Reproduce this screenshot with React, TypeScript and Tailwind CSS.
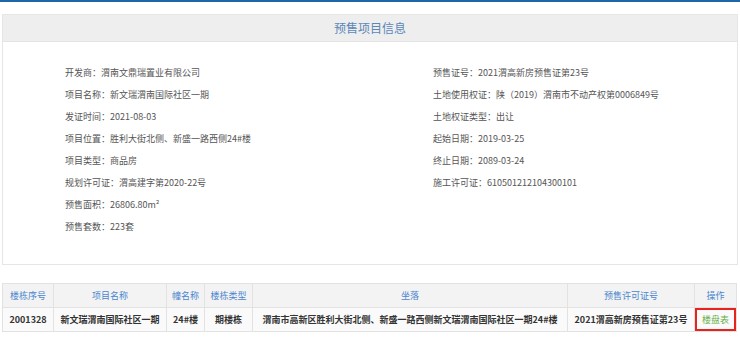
import React from "react";

const left: [string, React.ReactNode][] = [
  ["开发商", "渭南文鼎瑞置业有限公司"],
  ["项目名称", "新文瑞渭南国际社区一期"],
  ["发证时间", "2021-08-03"],
  ["项目位置", "胜利大街北侧、新盛一路西侧24#楼"],
  ["项目类型", "商品房"],
  ["规划许可证", "渭高建字第2020-22号"],
  ["预售面积", <>26806.80m²</>],
  ["预售套数", "223套"],
];
const right: [string, string][] = [
  ["预售证号", "2021渭高新房预售证第23号"],
  ["土地使用权证", "陕（2019）渭南市不动产权第0006849号"],
  ["土地权证类型", "出让"],
  ["起始日期", "2019-03-25"],
  ["终止日期", "2089-03-24"],
  ["施工许可证", "610501212104300101"],
];

const font = { fontFamily: '"Noto Sans CJK SC", "Noto Sans", sans-serif' };

export default function App() {
  const rows: React.ReactNode[] = [];
  for (let i = 0; i < left.length; i++) {
    rows.push(
      <div key={"l" + i} className="whitespace-nowrap">
        {left[i][0]}：{left[i][1]}
      </div>
    );
    rows.push(
      <div key={"r" + i} className="whitespace-nowrap">
        {right[i] ? `${right[i][0]}：${right[i][1]}` : ""}
      </div>
    );
  }
  const cols = [
    "w-[51px]",
    "w-[113px]",
    "w-[38px]",
    "w-[48px]",
    "w-[315px]",
    "w-[127px]",
    "",
  ];
  const heads = ["楼栋序号", "项目名称", "幢名称", "楼栋类型", "坐落", "预售许可证号", "操作"];
  const data = [
    "2001328",
    "新文瑞渭南国际社区一期",
    "24#楼",
    "期楼栋",
    "渭南市高新区胜利大街北侧、新盛一路西侧新文瑞渭南国际社区一期24#楼",
    "2021渭高新房预售证第23号",
  ];
  return (
    <div className="w-[740px] h-[343px] bg-white overflow-hidden" style={font}>
      <div className="h-[2px] bg-[#1d66a8]" />
      <div className="px-[2px] pt-[12px]">
        <div className="border border-[#e6e6e6] h-[251px]">
          <div className="h-[27px] bg-[#eeeeee] border-b border-[#e4e4e4] flex items-center justify-center text-[12px] text-[#5b87b8]">
            预售项目信息
          </div>
          <div className="pl-[62px] pt-[20px] grid grid-cols-[368px_1fr] text-[9px] leading-[22px] text-[#555]">
            {rows}
          </div>
        </div>
        <table className="mt-[18px] w-[735px] border-collapse table-fixed text-[9px]">
          <colgroup>
            {cols.map((c, i) => (
              <col key={i} className={c} />
            ))}
          </colgroup>
          <thead>
            <tr className="h-[24px] bg-[#f3f3f3]">
              {heads.map((h, i) => (
                <th key={i} className="border border-[#e2e2e2] font-normal text-[#4a86cf] text-center p-0">
                  {h}
                </th>
              ))}
            </tr>
          </thead>
          <tbody>
            <tr className="h-[24px] bg-[#fafafa]">
              {data.map((d, i) => (
                <td key={i} className="border border-[#e2e2e2] font-bold text-[#333] text-center p-0 whitespace-nowrap">
                  {d}
                </td>
              ))}
              <td className="border border-[#e2e2e2] p-0 text-center">
                <div className="mx-auto w-[41px] h-[23px] border-2 border-[#e8231d] flex items-center justify-center text-[#6aae48]">
                  楼盘表
                </div>
              </td>
            </tr>
          </tbody>
        </table>
      </div>
    </div>
  );
}
